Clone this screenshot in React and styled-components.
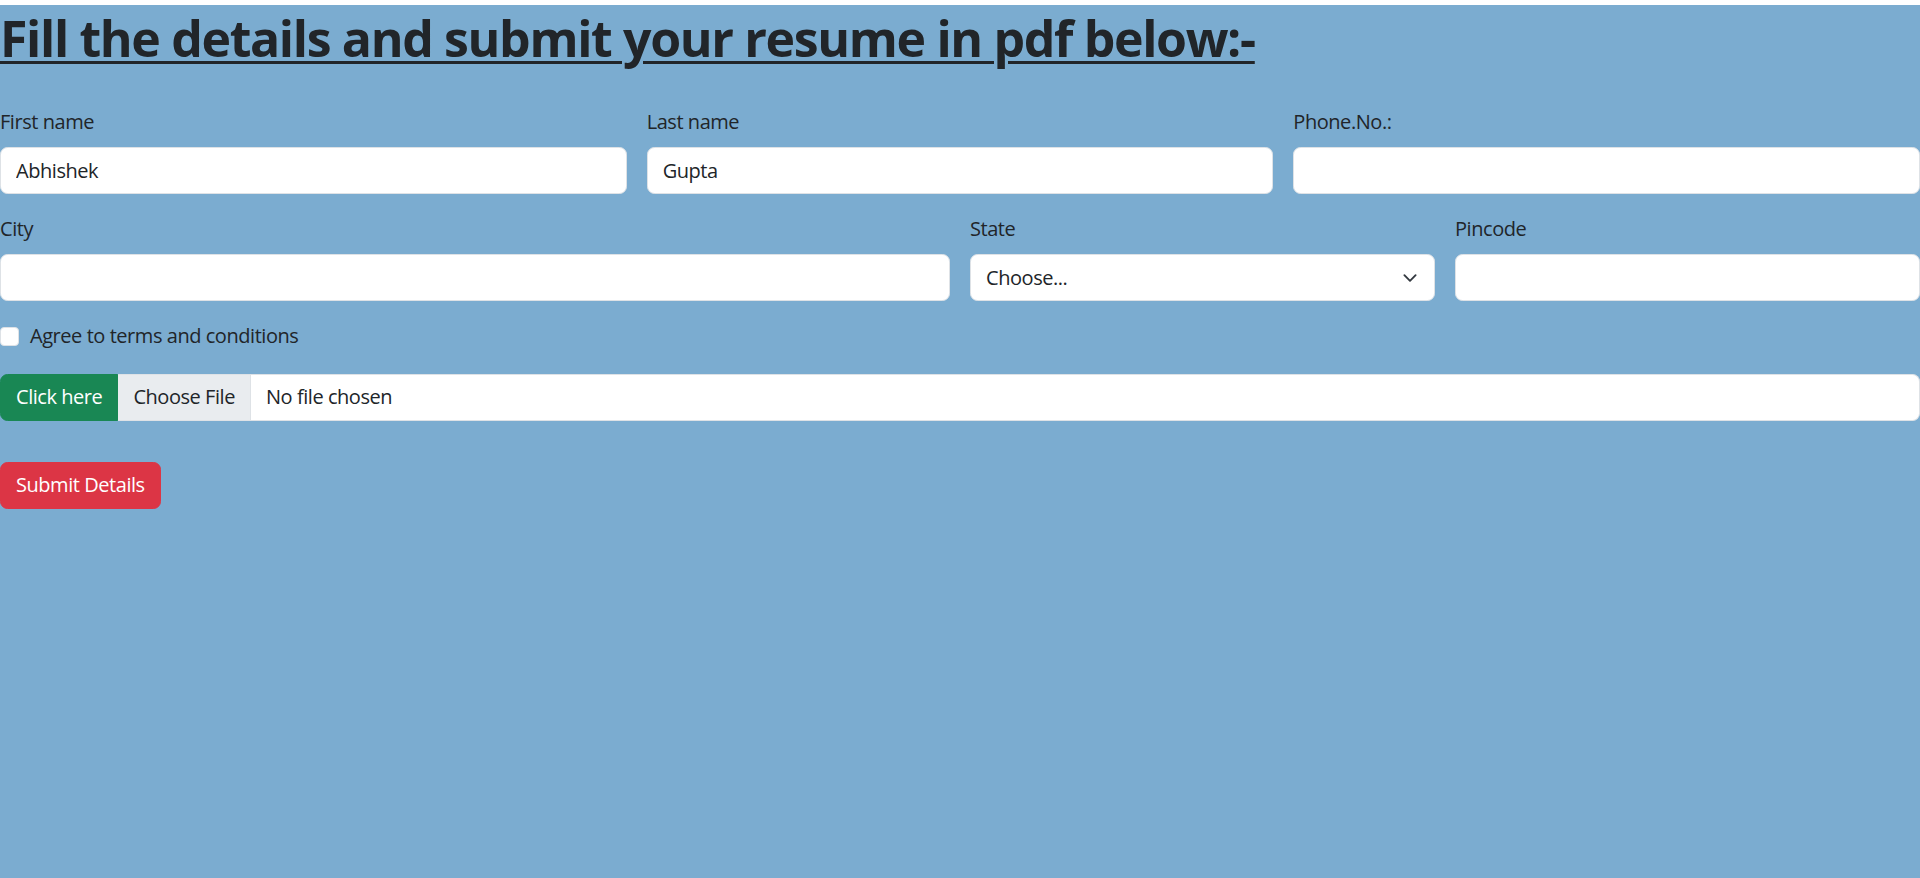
import React from "react";
import styled, { createGlobalStyle } from "styled-components";

const GlobalStyle = createGlobalStyle`
  *, *::before, *::after { box-sizing: border-box; }
  html, body { margin: 0; padding: 0; }
  body {
    background: #7bacd0;
    color: #212529;
    font-family: "Open Sans", "Noto Sans", sans-serif;
    font-size: 20px;
    line-height: 1.5;
    letter-spacing: -0.45px;
  }
`;

const Page = styled.main`
  min-height: 100vh;
  border-top: 5px solid #ffffff;
`;

const Title = styled.h1`
  margin: 3px 0 10px;
  font-size: 50px;
  font-weight: 700;
  line-height: 1.2;
  letter-spacing: -1.35px;
  text-decoration: underline;
  text-decoration-thickness: 3px;
  text-underline-offset: 4px;
`;

const Form = styled.form`
  margin-top: 39px;
  display: grid;
  grid-template-columns: repeat(12, minmax(0, 1fr));
  gap: 20px;
`;

const Field = styled.div`
  grid-column: span ${(p) => p.$span || 12};
  margin-top: ${(p) => p.$offset || 0}px;
`;

const Label = styled.label`
  display: block;
  margin-bottom: 10px;
`;

const Control = styled.input`
  display: block;
  width: 100%;
  padding: 7.5px 15px;
  font: inherit;
  letter-spacing: inherit;
  color: #212529;
  background: #ffffff;
  border: 1px solid #dee2e6;
  border-radius: 7.5px;
  outline: none;
`;

const SelectWrap = styled.div`
  position: relative;
`;

const Select = styled.select`
  display: block;
  width: 100%;
  padding: 7.5px 45px 7.5px 15px;
  font: inherit;
  letter-spacing: inherit;
  color: #212529;
  background: #ffffff;
  border: 1px solid #dee2e6;
  border-radius: 7.5px;
  appearance: none;
  outline: none;
`;

const Chevron = styled.svg`
  position: absolute;
  right: 15px;
  top: 50%;
  width: 20px;
  height: 15px;
  transform: translateY(-50%);
  pointer-events: none;
`;

const Check = styled.label`
  display: flex;
  align-items: center;
  gap: 11px;
  min-height: 30px;
  margin-bottom: 2.5px;
`;

const Box = styled.input`
  appearance: none;
  margin: 0;
  width: 19px;
  height: 19px;
  background: #ffffff;
  border: 1px solid #dee2e6;
  border-radius: 4px;
`;

const FileGroup = styled.div`
  display: flex;
  align-items: stretch;
`;

const GreenButton = styled.button`
  padding: 7.5px 15px;
  font: inherit;
  letter-spacing: inherit;
  color: #ffffff;
  background: #198754;
  border: 1px solid #198754;
  border-radius: 7.5px 0 0 7.5px;
`;

const FileBox = styled.label`
  flex: 1;
  display: flex;
  align-items: center;
  background: #ffffff;
  border: 1px solid #dee2e6;
  border-left: none;
  border-radius: 0 7.5px 7.5px 0;
  overflow: hidden;
`;

const ChooseButton = styled.span`
  align-self: stretch;
  display: flex;
  align-items: center;
  padding: 7.5px 15px;
  background: #e9ecef;
  border-right: 1px solid #dee2e6;
`;

const FileName = styled.span`
  margin-left: 15px;
`;

const HiddenFile = styled.input`
  display: none;
`;

const SubmitButton = styled.button`
  padding: 7.5px 15px;
  font: inherit;
  letter-spacing: inherit;
  color: #ffffff;
  background: #dc3545;
  border: 1px solid #dc3545;
  border-radius: 7.5px;
`;

export default function App() {
  return (
    <>
      <GlobalStyle />
      <Page>
        <Title>Fill the details and submit your resume in pdf below:-</Title>
        <Form onSubmit={(e) => e.preventDefault()}>
          <Field $span={4}>
            <Label htmlFor="first">First name</Label>
            <Control id="first" type="text" defaultValue="Abhishek" />
          </Field>
          <Field $span={4}>
            <Label htmlFor="last">Last name</Label>
            <Control id="last" type="text" defaultValue="Gupta" />
          </Field>
          <Field $span={4}>
            <Label htmlFor="phone">Phone.No.:</Label>
            <Control id="phone" type="tel" />
          </Field>

          <Field $span={6}>
            <Label htmlFor="city">City</Label>
            <Control id="city" type="text" />
          </Field>
          <Field $span={3}>
            <Label htmlFor="state">State</Label>
            <SelectWrap>
              <Select id="state" defaultValue="">
                <option value="">Choose...</option>
                <option>...</option>
              </Select>
              <Chevron viewBox="0 0 16 16" aria-hidden="true">
                <path
                  fill="none"
                  stroke="#343a40"
                  strokeLinecap="round"
                  strokeLinejoin="round"
                  strokeWidth="2"
                  d="m2 5 6 6 6-6"
                />
              </Chevron>
            </SelectWrap>
          </Field>
          <Field $span={3}>
            <Label htmlFor="pin">Pincode</Label>
            <Control id="pin" type="text" />
          </Field>

          <Field>
            <Check>
              <Box type="checkbox" />
              Agree to terms and conditions
            </Check>
          </Field>

          <Field>
            <FileGroup>
              <GreenButton type="button">Click here</GreenButton>
              <FileBox>
                <HiddenFile type="file" accept="application/pdf" />
                <ChooseButton>Choose File</ChooseButton>
                <FileName>No file chosen</FileName>
              </FileBox>
            </FileGroup>
          </Field>

          <Field $offset={21}>
            <SubmitButton type="submit">Submit Details</SubmitButton>
          </Field>
        </Form>
      </Page>
    </>
  );
}
